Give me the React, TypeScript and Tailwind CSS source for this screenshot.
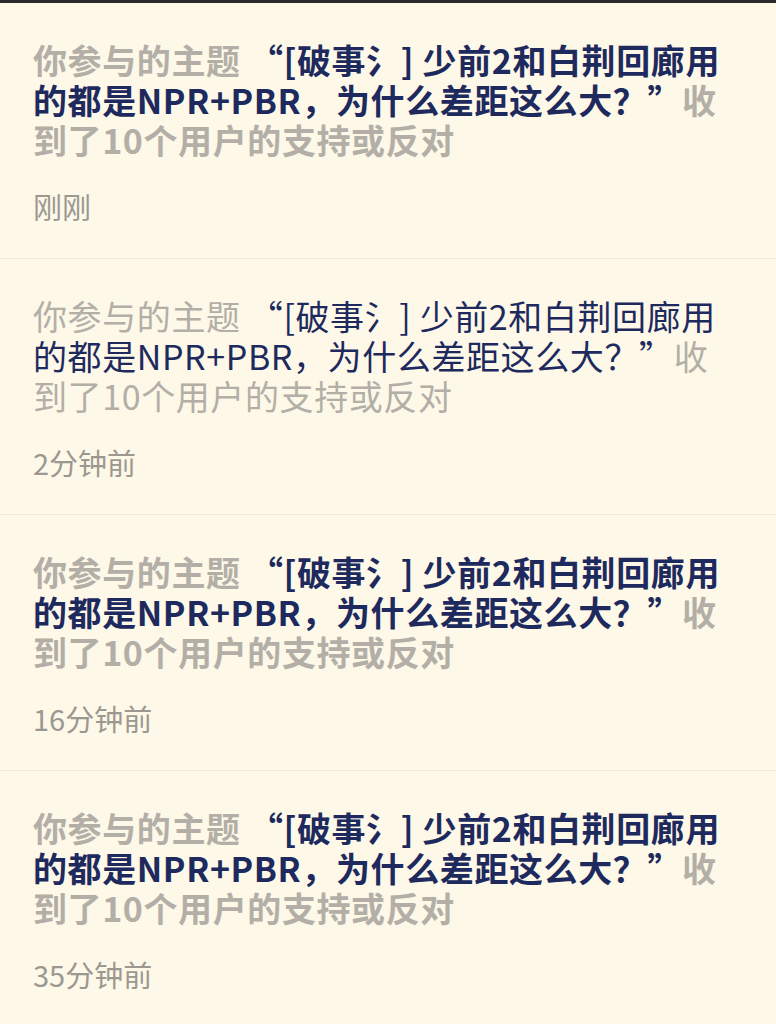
import React from 'react';

interface Notice {
    time: string;
    bold: boolean;
}

const notices: Notice[] = [
    { time: '刚刚', bold: true },
    { time: '2分钟前', bold: false },
    { time: '16分钟前', bold: true },
    { time: '35分钟前', bold: true },
];

const NoticeItem: React.FC<{ item: Notice }> = ({ item }) => {
    const weight = item.bold ? 'font-bold' : 'font-normal';
    return (
        <div className="pl-[33px] pr-[51px] pt-[37px] pb-[32px] border-b border-[#efe9d7]">
            <p className={`text-[34px] leading-[40px] tracking-[0.6px] text-[#b3afa7] ${weight}`}>
                你参与的主题 <span className="text-[#1e2a5e]">“[破事氵] 少前2和白荆回廊用的都是NPR+PBR，为什么差距这么大？”</span>收到了10个用户的支持或反对
            </p>
            <div className="mt-[26px] text-[29px] leading-[40px] text-[#9c9890]">{item.time}</div>
        </div>
    );
};

export default function App() {
    return (
        <div
            className="min-h-screen w-full bg-[#fdf8e8] border-t-[3px] border-[#2b2b2b]"
            style={{ fontFamily: '"Noto Sans CJK SC", "Noto Sans", sans-serif' }}
        >
            {notices.map((n, i) => (
                <NoticeItem key={i} item={n} />
            ))}
        </div>
    );
}
